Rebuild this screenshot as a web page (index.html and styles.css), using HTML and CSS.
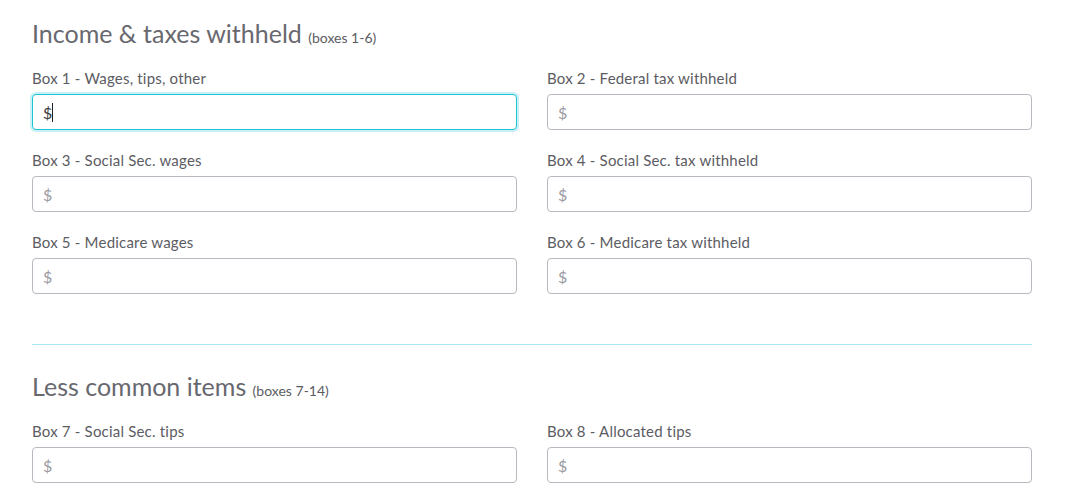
FILE: index.html
```html
<!DOCTYPE html>
<html lang="en">
<head>
    <meta charset="UTF-8">
    <meta name="viewport" content="width=device-width, initial-scale=1.0">
    <title>W-2 Income</title>
    <link rel="stylesheet" href="styles.css">
</head>
<body>
    <div class="w2-form">
        <section class="form-section">
            <h2 class="section-title">Income &amp; taxes withheld <span class="boxes">(boxes 1-6)</span></h2>
            <div class="field-grid">
                <div class="field">
                    <label for="box1">Box 1 - Wages, tips, other</label>
                    <div class="input-wrap is-focused">
                        <input type="text" id="box1" value="$">
                        <span class="caret"></span>
                    </div>
                </div>
                <div class="field">
                    <label for="box2">Box 2 - Federal tax withheld</label>
                    <input type="text" id="box2" placeholder="$">
                </div>
                <div class="field">
                    <label for="box3">Box 3 - Social Sec. wages</label>
                    <input type="text" id="box3" placeholder="$">
                </div>
                <div class="field">
                    <label for="box4">Box 4 - Social Sec. tax withheld</label>
                    <input type="text" id="box4" placeholder="$">
                </div>
                <div class="field">
                    <label for="box5">Box 5 - Medicare wages</label>
                    <input type="text" id="box5" placeholder="$">
                </div>
                <div class="field">
                    <label for="box6">Box 6 - Medicare tax withheld</label>
                    <input type="text" id="box6" placeholder="$">
                </div>
            </div>
        </section>

        <hr class="divider">

        <section class="form-section">
            <h2 class="section-title">Less common items <span class="boxes">(boxes 7-14)</span></h2>
            <div class="field-grid">
                <div class="field">
                    <label for="box7">Box 7 - Social Sec. tips</label>
                    <input type="text" id="box7" placeholder="$">
                </div>
                <div class="field">
                    <label for="box8">Box 8 - Allocated tips</label>
                    <input type="text" id="box8" placeholder="$">
                </div>
            </div>
        </section>
    </div>
</body>
</html>
```

FILE: styles.css
```css
body {
    margin: 0;
    background: #fff;
    font-family: Lato, "Noto Sans", Arial, sans-serif;
    color: #5c5c63;
}
.w2-form {
    width: 1000px;
    padding: 17px 32px 0;
}
.section-title {
    margin: 0 0 14px;
    font-size: 25px;
    font-weight: normal;
    line-height: 32px;
    color: #68686f;
}
.boxes {
    font-size: 14px;
    color: #5c5c63;
}
.field-grid {
    display: grid;
    grid-template-columns: 1fr 1fr;
    column-gap: 30px;
    row-gap: 20px;
}
.field label {
    display: block;
    font-size: 15px;
    letter-spacing: 0.2px;
    line-height: 20px;
    margin-bottom: 6px;
    color: #5c5c63;
}
.field input {
    display: block;
    width: 100%;
    height: 36px;
    box-sizing: border-box;
    padding: 0 10px;
    border: 1px solid #b8b8c0;
    border-radius: 4px;
    font-family: inherit;
    font-size: 16px;
    color: #3a3a40;
    background: #fff;
    outline: none;
}
.field input::placeholder {
    color: #9b9ba2;
}
.input-wrap {
    position: relative;
}
.input-wrap.is-focused input {
    border-color: #1fc3d6;
    box-shadow: 0 0 0 2px #c9f0f6;
}
.caret {
    position: absolute;
    left: 20px;
    top: 9px;
    width: 1px;
    height: 19px;
    background: #222;
}
.divider {
    margin: 50px 0 25px;
    border: 0;
    border-top: 1px solid #a9e6f4;
}
```
